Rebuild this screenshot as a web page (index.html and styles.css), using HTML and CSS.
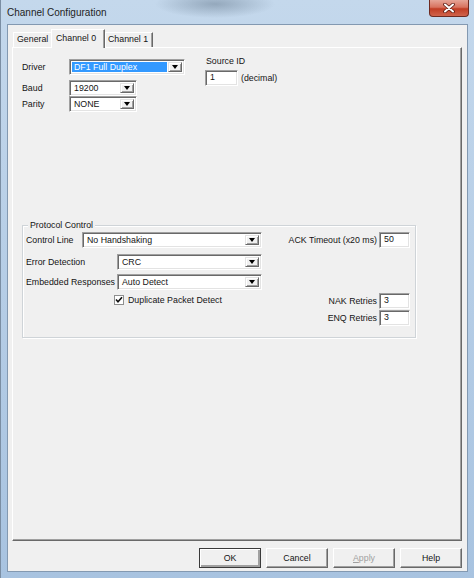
FILE: index.html
```html
<!DOCTYPE html>
<html lang="en">

<head>
    <meta charset="UTF-8">
    <title>Channel Configuration</title>
    <link rel="stylesheet" href="styles.css">
</head>

<body>
    <div class="window">
        <div class="titlebar">
            <span class="title">Channel Configuration</span>
            <div class="close">
                <svg width="14" height="10" viewBox="0 0 14 10">
                    <path d="M3 1.5 L11 8.5 M11 1.5 L3 8.5" stroke="#5a1a10" stroke-width="3.6" stroke-linecap="round" />
                    <path d="M3 1.5 L11 8.5 M11 1.5 L3 8.5" stroke="#ffffff" stroke-width="2" stroke-linecap="round" />
                </svg>
            </div>
        </div>
        <div class="client">
            <div class="tabs">
                <div class="tab tab-general">General</div>
                <div class="tab tab-active">Channel 0</div>
                <div class="tab tab-ch1">Channel 1</div>
            </div>
            <div class="panel">
                <div class="top">
                    <div class="fields">
                        <div class="row row-driver">
                            <label>Driver</label>
                            <div class="combo w116">
                                <span class="combo__text selected">DF1 Full Duplex</span>
                                <span class="arrow"></span>
                            </div>
                        </div>
                        <div class="row">
                            <label>Baud</label>
                            <div class="combo w68">
                                <span class="combo__text">19200</span>
                                <span class="arrow"></span>
                            </div>
                        </div>
                        <div class="row">
                            <label>Parity</label>
                            <div class="combo w68">
                                <span class="combo__text">NONE</span>
                                <span class="arrow"></span>
                            </div>
                        </div>
                    </div>
                    <div class="source">
                        <div class="source__label">Source ID</div>
                        <div class="source__row">
                            <div class="edit w33">1</div>
                            <span>(decimal)</span>
                        </div>
                    </div>
                </div>

                <div class="group">
                    <span class="legend">Protocol Control</span>
                    <div class="group__left">
                        <div class="grow">
                            <label>Control Line</label>
                            <div class="combo w180">
                                <span class="combo__text">No Handshaking</span>
                                <span class="arrow"></span>
                            </div>
                        </div>
                        <div class="grow grow-err">
                            <label>Error Detection</label>
                            <div class="combo w145">
                                <span class="combo__text">CRC</span>
                                <span class="arrow"></span>
                            </div>
                        </div>
                        <div class="grow grow-emb">
                            <label>Embedded Responses</label>
                            <div class="combo w145">
                                <span class="combo__text">Auto Detect</span>
                                <span class="arrow"></span>
                            </div>
                        </div>
                        <div class="check">
                            <span class="check__box">
                                <svg width="8" height="8" viewBox="0 0 8 8">
                                    <path d="M1 3.5 L3 5.8 L7 1.2" fill="none" stroke="#111" stroke-width="1.6" />
                                </svg>
                            </span>
                            <span>Duplicate Packet Detect</span>
                        </div>
                    </div>
                    <div class="group__right">
                        <div class="rrow">
                            <label>ACK Timeout (x20 ms)</label>
                            <div class="edit w31">50</div>
                        </div>
                        <div class="rrow rrow-nak">
                            <label>NAK Retries</label>
                            <div class="edit w31">3</div>
                        </div>
                        <div class="rrow rrow-enq">
                            <label>ENQ Retries</label>
                            <div class="edit w31">3</div>
                        </div>
                    </div>
                </div>
            </div>
            <div class="buttons">
                <button class="btn btn-default">OK</button>
                <button class="btn">Cancel</button>
                <button class="btn btn-disabled"><u>A</u>pply</button>
                <button class="btn">Help</button>
            </div>
        </div>
    </div>
</body>

</html>
```

FILE: styles.css
```css
* {
    box-sizing: border-box;
    padding: 0px;
    margin: 0px;
}

body {
    width: 474px;
    height: 578px;
    overflow: hidden;
    white-space: nowrap;
    font-family: "Liberation Sans", Arial, sans-serif;
    font-size: 8.8px;
    color: #141414;
    background:
        radial-gradient(ellipse 60px 14px at 215px 4px, rgba(90, 110, 130, 0.45), rgba(90, 110, 130, 0) 100%),
        linear-gradient(180deg, #c4d8ec 0%, #b8cfe7 40%, #a8c3e0 100%);
}

.window {
    height: 578px;
    display: flex;
    flex-direction: column;
    border-left: 1px solid #7b8ea3;
}

.titlebar {
    height: 24px;
    display: flex;
    justify-content: space-between;
    align-items: flex-start;
    padding-left: 6px;
}

.title {
    font-size: 10px;
    color: #1e1e1e;
    padding-top: 7px;
}

.close {
    width: 40px;
    height: 17px;
    margin-right: 5px;
    display: flex;
    align-items: center;
    justify-content: center;
    border: 1px solid #6e2a20;
    border-top: none;
    border-radius: 0 0 4px 4px;
    background: linear-gradient(180deg, #e6a597 0%, #d8735f 45%, #c13d24 55%, #d0644c 100%);
}

.client {
    flex: 1;
    margin: 0 6px 6px 6px;
    border: 1px solid #8399b1;
    background-color: #f0f0f0;
    padding: 4px 5px 0 4px;
}

.tabs {
    height: 18px;
    display: flex;
    align-items: flex-end;
    padding-left: 1px;
}

.tab {
    height: 15px;
    line-height: 13px;
    padding: 0 3px;
    border-top: 1px solid #ffffff;
    border-left: 1px solid #ffffff;
    border-right: 1px solid #696969;
    box-shadow: inset -1px 0 #a0a0a0;
    background-color: #f0f0f0;
}

.tab-general {
    width: 38px;
    border-right: none;
    box-shadow: none;
}

.tab-active {
    width: 54px;
    height: 19px;
    margin-bottom: -1px;
    line-height: 16px;
    padding-left: 4px;
    position: relative;
    z-index: 1;
}

.tab-ch1 {
    width: 48px;
    padding-left: 2px;
}

.panel {
    height: 494px;
    border-top: 1px solid #ffffff;
    border-left: 1px solid #ffffff;
    border-right: 1px solid #696969;
    border-bottom: 1px solid #696969;
    box-shadow: inset -1px -1px #a0a0a0;
    padding: 11px 0 0 9px;
}

.top {
    height: 166px;
    display: flex;
    gap: 20px;
}

.fields {
    display: flex;
    flex-direction: column;
}

.row {
    height: 16px;
    display: flex;
    align-items: center;
}

.row-driver {
    margin-bottom: 5px;
}

.row label {
    width: 47px;
}

.combo {
    height: 16px;
    display: flex;
    align-items: stretch;
    background-color: #ffffff;
    border: 1px solid;
    border-color: #a0a0a0 #ffffff #ffffff #a0a0a0;
    box-shadow: inset 1px 1px #696969, inset -1px -1px #e3e3e3;
    padding: 2px 2px 2px 2px;
}

.combo__text {
    flex: 1;
    line-height: 10px;
    padding-left: 2px;
}

.combo__text.selected {
    background-color: #3399ff;
    color: #ffffff;
    margin-right: 1px;
}

.arrow {
    width: 14px;
    display: flex;
    align-items: center;
    justify-content: center;
    background-color: #f0f0f0;
    border: 1px solid;
    border-color: #e3e3e3 #696969 #696969 #e3e3e3;
    box-shadow: inset 1px 1px #ffffff, inset -1px -1px #a0a0a0;
}

.arrow::after {
    content: "";
    border-top: 4px solid #000000;
    border-left: 3.5px solid transparent;
    border-right: 3.5px solid transparent;
}

.w116 { width: 116px; }
.w68 { width: 68px; }
.w180 { width: 180px; }
.w145 { width: 145px; }
.w33 { width: 33px; }
.w31 { width: 31px; }

.edit {
    height: 16px;
    line-height: 13px;
    padding-left: 4px;
    background-color: #ffffff;
    border: 1px solid;
    border-color: #a0a0a0 #ffffff #ffffff #a0a0a0;
    box-shadow: inset 1px 1px #696969, inset -1px -1px #e3e3e3;
}

.source {
    margin-top: -3px;
}

.source__label {
    line-height: 11px;
    margin-bottom: 3px;
    padding-left: 1px;
}

.source__row {
    display: flex;
    align-items: center;
    gap: 3px;
}

.group {
    position: relative;
    width: 394px;
    height: 113px;
    display: flex;
    justify-content: space-between;
    padding: 6px 5px 0 3px;
    border: 1px solid #cfd4d8;
    box-shadow: inset 1px 1px #ffffff, 1px 1px #ffffff;
}

.legend {
    position: absolute;
    top: -6px;
    left: 5px;
    padding: 0 2px;
    line-height: 11px;
    background-color: #f0f0f0;
}

.group__left {
    width: 236px;
    display: flex;
    flex-direction: column;
}

.grow {
    height: 16px;
    display: flex;
    align-items: center;
    justify-content: space-between;
}

.grow-err {
    margin-top: 6px;
}

.grow-emb {
    margin-top: 4px;
}

.check {
    margin-top: 5px;
    padding-left: 88px;
    display: flex;
    align-items: center;
    gap: 4px;
}

.check__box {
    width: 10px;
    height: 10px;
    display: flex;
    align-items: center;
    justify-content: center;
    background-color: #ffffff;
    border: 1px solid #8e8f8f;
}

.group__right {
    display: flex;
    flex-direction: column;
    align-items: flex-end;
}

.rrow {
    height: 16px;
    display: flex;
    align-items: center;
    gap: 2px;
}

.rrow-nak {
    margin-top: 45px;
}

.rrow-enq {
    margin-top: 1px;
}

.buttons {
    display: flex;
    justify-content: flex-end;
    gap: 5px;
    margin-top: 7px;
}

.btn {
    width: 62px;
    height: 20px;
    font-family: "Liberation Sans", Arial, sans-serif;
    font-size: 8.8px;
    color: #141414;
    background-color: #f0f0f0;
    border: 1px solid;
    border-color: #ffffff #696969 #696969 #ffffff;
    box-shadow: inset -1px -1px #a0a0a0;
}

.btn-default {
    border: 1px solid #3a3a3a;
    box-shadow: inset 1px 1px #ffffff, inset -2px -2px #a0a0a0;
}

.btn-disabled {
    color: #a0a0a0;
}
```
